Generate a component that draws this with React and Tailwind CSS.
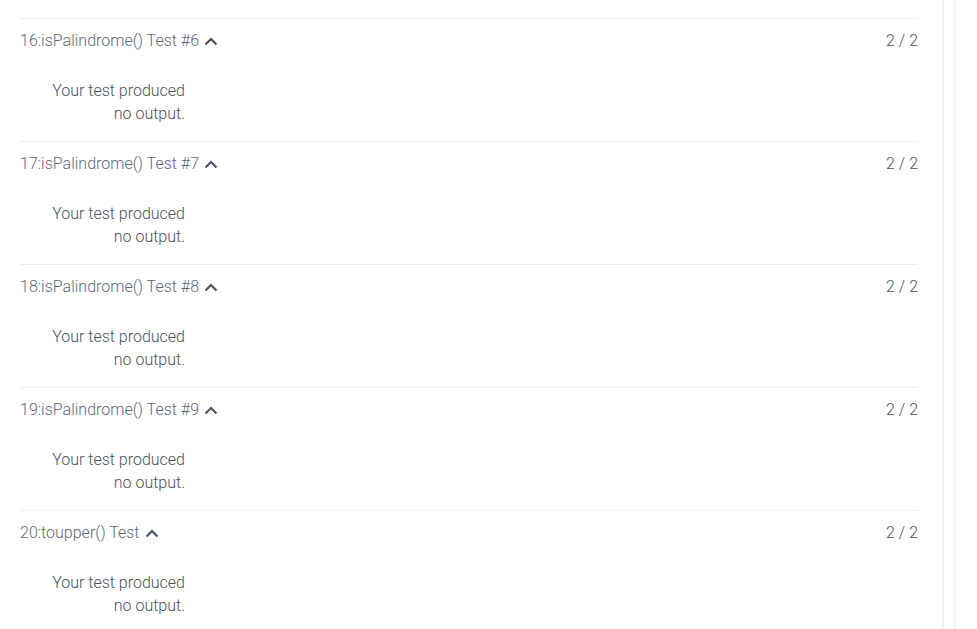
import React from "react";

const items = [
  "16:isPalindrome() Test #6",
  "17:isPalindrome() Test #7",
  "18:isPalindrome() Test #8",
  "19:isPalindrome() Test #9",
  "20:toupper() Test",
];

function Chevron() {
  return (
    <svg width="14" height="9" viewBox="0 0 14 9" className="ml-[5px]">
      <path d="M1.5 7.5 L7 2 L12.5 7.5" fill="none" stroke="#4a5565" strokeWidth="2.2" />
    </svg>
  );
}

export default function App() {
  return (
    <div
      className="flex h-[629px] w-[977px] overflow-hidden bg-white"
      style={{ fontFamily: "Roboto, 'Liberation Sans', sans-serif" }}
    >
      <div className="w-[942px] pl-5 pr-6 pt-[18px]">
        {items.map((t) => (
          <div key={t} className="border-t border-[#ececec]">
            <div className="flex items-center justify-between pt-[12px] pb-[10px] text-[16px] leading-[20px] font-light">
              <div className="flex items-center text-[#5d6878]">
                <span>{t}</span>
                <Chevron />
              </div>
              <span className="text-[#4a5260]">2 / 2</span>
            </div>
            <div className="pt-[18px] pb-[16px]">
              <div className="w-[165px] text-right text-[16px] leading-[23px] font-light text-[#4b525c]">
                Your test produced
                <br />
                no output.
              </div>
            </div>
          </div>
        ))}
      </div>
      <div className="w-[2px] bg-[#f1f1f1]" />
      <div className="w-[10px]" />
      <div className="w-[2px] bg-[#f1f1f1]" />
      <div className="flex-1" />
    </div>
  );
}
